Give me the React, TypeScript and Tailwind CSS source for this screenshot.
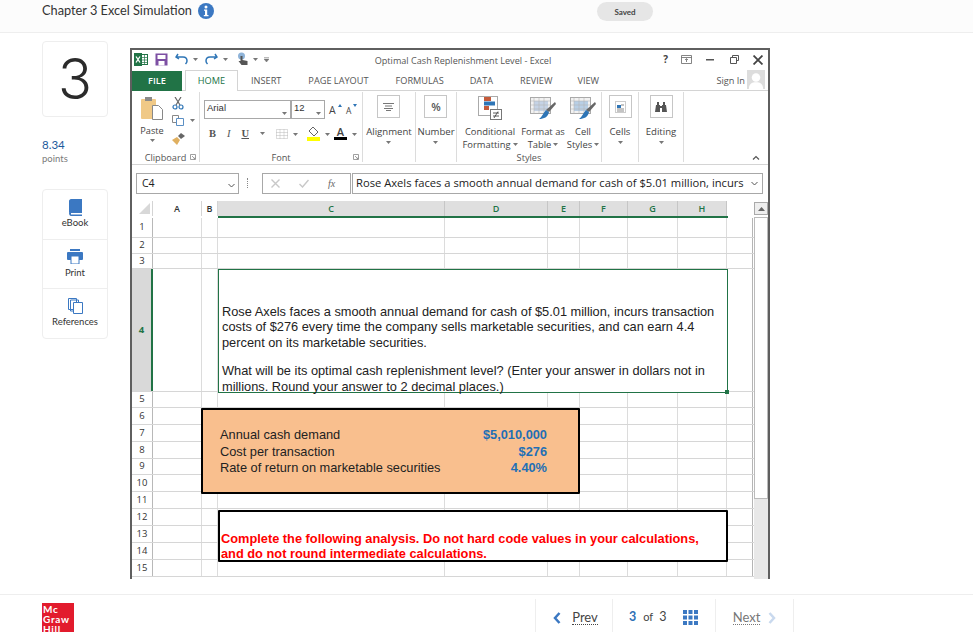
import React from "react";

const columns = [
  { name: "A", w: 49 }, { name: "B", w: 16 }, { name: "C", w: 227 }, { name: "D", w: 103 }, { name: "E", w: 32 },
  { name: "F", w: 48 }, { name: "G", w: 50 }, { name: "H", w: 49 }, { name: "", w: 26 },
];
const rows = [
  { n: "1", h: 20 }, { n: "2", h: 16 }, { n: "3", h: 15 }, { n: "4", h: 123 }, { n: "5", h: 16 }, { n: "6", h: 17 }, { n: "7", h: 17 },
  { n: "8", h: 17 }, { n: "9", h: 16 }, { n: "10", h: 17 }, { n: "11", h: 17 }, { n: "12", h: 17 }, { n: "13", h: 17 }, { n: "14", h: 17 }, { n: "15", h: 17 },
];

function Caret({ className = "" }: { className?: string }) {
  return <svg width="5" height="3" viewBox="0 0 5 3" className={className}><path d="M0 0h5L2.500 3z" fill="#777" /></svg>;
}

function Sheet() {
  return (
    <div className="relative flex min-h-0 flex-1 overflow-hidden">
      <div className="relative w-[623px] shrink-0">
        <div className="flex h-[17px] border-b-2 border-white">
          <div className="flex w-[21px] shrink-0 items-end justify-end border-r border-[#d4d4d4] pr-[2px] pb-[2px]">
            <svg width="11" height="11" viewBox="0 0 11 11"><path d="M11 0v11H0z" fill="#d8d8d8" /></svg>
          </div>
          {columns.map((c, i) => (
            <div
              key={i}
              style={{ width: c.w }}
              className={`flex shrink-0 items-center justify-center border-r text-[9px] font-semibold ${i < 2 ? "border-[#d4d4d4] bg-white text-[#333]" : i < 8 ? "border-[#c6c6c6] bg-[#dfdfdf] text-[#217346]" : "border-transparent bg-white"}`}
            >
              {c.name}
            </div>
          ))}
        </div>
        <div className="absolute top-[15px] left-[86px] h-[2px] w-[510px] bg-[#217346]" />
        {rows.map((r) => (
          <div key={r.n} className="flex border-b border-[#d6d6d6]" style={{ height: r.h }}>
            <div className={`flex w-[21px] shrink-0 items-center justify-center border-r text-[9.500px] ${r.n === "4" ? "border-r-2 border-[#217346] bg-[#d9d9d9] text-[8px] font-bold text-[#217346]" : "border-[#b8b8b8] text-[#333]"}`}>
              {r.n}
            </div>
            {columns.map((c, i) => (
              <div key={i} style={{ width: c.w }} className={`shrink-0 border-r ${i === 8 ? "border-[#b5b5b5]" : "border-[#dcdcdc]"}`} />
            ))}
          </div>
        ))}

        <div className="absolute top-[68px] left-[86px] flex h-[124px] w-[510px] flex-col justify-end border border-[#217346] bg-white pr-[2px] pl-[3px] font-['Liberation_Sans',sans-serif] text-[12.800px] leading-[15.500px] text-[#222]">
          <div className="-mb-[2px] whitespace-nowrap">
            <div>Rose Axels faces a smooth annual demand for cash of $5.01 million, incurs transaction<br />costs of $276 every time the company sells marketable securities, and can earn 4.4<br />percent on its marketable securities.</div>
            <div className="mt-[13px]">What will be its optimal cash replenishment level? (Enter your answer in dollars not in<br />millions. Round your answer to 2 decimal places.)</div>
          </div>
          <div className="absolute right-[-2px] bottom-[-2px] h-[4px] w-[4px] bg-[#217346]" />
        </div>

        <div className="absolute top-[207px] left-[69px] flex h-[86px] w-[379px] items-center rounded-[1px] border-2 border-black bg-[#f9bf8e] pr-[31px] pl-[17px] font-['Liberation_Sans',sans-serif] text-[12.800px] leading-[16.500px] text-[#222]">
          <div className="mt-[2px] flex-1">
            <div>Annual cash demand</div>
            <div>Cost per transaction</div>
            <div>Rate of return on marketable securities</div>
          </div>
          <div className="mt-[2px] text-right font-bold text-[#1f6fb5]">
            <div>$5,010,000</div>
            <div>$276</div>
            <div>4.40%</div>
          </div>
        </div>

        <div className="absolute top-[309px] left-[86px] flex h-[52px] w-[510px] flex-col justify-end rounded-[1px] border-2 border-black bg-white pr-[1px] pl-[1px] font-['Liberation_Sans',sans-serif] text-[12.800px] leading-[15px] font-bold text-[#ff0000]">
          <div className="-mb-[1px] whitespace-nowrap">Complete the following analysis. Do not hard code values in your calculations,<br />and do not round intermediate calculations.</div>
        </div>
      </div>

      <div className="relative flex-1">
        <div className="absolute top-[3px] left-[0px] h-[10px] w-px bg-[#555]" />
        <div className="absolute top-[1px] right-0 flex h-[13px] w-[14px] items-center justify-center border border-[#aaa] bg-[#eee]">
          <svg width="7" height="4" viewBox="0 0 7 4"><path d="M3.500 0L7 4H0z" fill="#666" /></svg>
        </div>
        <div className="absolute top-[16px] right-0 h-[282px] w-[14px] border border-[#bbb] bg-white" />
        <div className="absolute top-[298px] right-0 bottom-0 w-[14px] bg-[#e8e8e8]" />
      </div>
    </div>
  );
}

function Group({ w, label, launcher, children }: { w: number; label?: string; launcher?: boolean; children: React.ReactNode }) {
  return (
    <div className="relative h-full shrink-0 border-r border-[#dcdcdc]" style={{ width: w }}>
      {children}
      {label && <div className="absolute right-0 bottom-[-2px] left-0 text-center text-[9.200px] leading-[12px] text-[#555]">{label}</div>}
      {launcher && (
        <svg width="6" height="6" viewBox="0 0 6 6" className="absolute right-[3px] bottom-[2px]"><path d="M.5.500h5v5h-5zM2 2l3 3M3.500 5H5V3.500" fill="none" stroke="#888" strokeWidth=".8" /></svg>
      )}
    </div>
  );
}

function BigBtn({ label, icon }: { label: React.ReactNode; icon: React.ReactNode }) {
  return (
    <div className="flex h-full flex-col items-center pt-[3px] text-[9.600px] leading-[13px] text-[#444]">
      <div className="flex h-[23px] w-[23px] items-center justify-center border border-[#c6c6c6]">{icon}</div>
      <div className="mt-[7px]">{label}</div>
      <Caret className="mt-[3px]" />
    </div>
  );
}

function TableBrush({ tint }: { tint: string }) {
  return (
    <svg width="26" height="24" viewBox="0 0 26 24">
      <rect x=".5" y="1.500" width="20" height="16" fill="#f2f2f2" stroke="#aaa" />
      <rect x="4" y="5" width="14" height="10" fill={tint} />
      <path d="M4 1.500v16M9 1.500v16M14 1.500v16M.5 5h20M.5 9h20M.5 13h20" stroke="#b5b5b5" strokeWidth=".6" />
      <path d="M25 6l1 2-7 8-3-2z" fill="#666" />
      <path d="M16 14l3 2c-1 5-5 7-10 7 3-2 4-6 7-9z" fill="#2e75b6" />
    </svg>
  );
}

function StyleLabel({ a, b }: { a: string; b: string }) {
  return (
    <>
      <div className="mt-[5px] whitespace-nowrap">{a}</div>
      <div className="flex items-center gap-[2px] whitespace-nowrap">{b}<Caret /></div>
    </>
  );
}

function Ribbon() {
  return (
    <div className="flex h-[74px] shrink-0 border-b border-[#d4d4d4] pt-[1px] pb-[2px] font-['Open_Sans',sans-serif]">
      <Group w={68} label="Clipboard" launcher>
        <div className="absolute top-[4px] left-[8px]">
          <svg width="24" height="24" viewBox="0 0 24 24">
            <rect x="1" y="3" width="15" height="20" rx="1" fill="#f0c987" />
            <rect x="5" y="1" width="7" height="4" fill="#8a8a8a" />
            <path d="M12.500 9.500h6l4 4v10h-10z" fill="#fff" stroke="#888" />
          </svg>
        </div>
        <div className="absolute top-[33px] left-[7px] w-[26px] text-center text-[9.200px] leading-[11px] text-[#444]">Paste</div>
        <Caret className="absolute top-[47px] left-[18px]" />
        <svg width="12" height="13" viewBox="0 0 12 13" className="absolute top-[5px] left-[40px]">
          <path d="M3 0l5 8M9 0L4 8" stroke="#666" strokeWidth="1.200" />
          <circle cx="3" cy="10" r="2" fill="none" stroke="#2e75b6" strokeWidth="1.200" />
          <circle cx="9" cy="10" r="2" fill="none" stroke="#2e75b6" strokeWidth="1.200" />
        </svg>
        <svg width="12" height="11" viewBox="0 0 12 11" className="absolute top-[23px] left-[40px]">
          <path d="M.5.500h6v7h-6z" fill="#fff" stroke="#888" />
          <path d="M4.500 3.500h7v7h-7z" fill="#fff" stroke="#5b8fc4" />
        </svg>
        <Caret className="absolute top-[27px] left-[58px]" />
        <svg width="13" height="12" viewBox="0 0 13 12" className="absolute top-[41px] left-[40px]">
          <path d="M0 7l5-3 3 3-3 5z" fill="#e0b060" />
          <path d="M6 3l3-3 4 3-4 3z" fill="#666" />
        </svg>
      </Group>

      <Group w={163} label="Font" launcher>
        <div className="absolute top-[8px] left-[4px] flex h-[19px] w-[87px] items-start border border-[#a8a8a8] pl-[2px] font-['Liberation_Sans',sans-serif] text-[9.500px] leading-[13px] text-[#333]">
          Arial
          <Caret className="absolute right-[3px] bottom-[3px]" />
        </div>
        <div className="absolute top-[8px] left-[91px] flex h-[19px] w-[34px] items-start border border-[#a8a8a8] pl-[2px] font-['Liberation_Sans',sans-serif] text-[9.500px] leading-[13px] text-[#333]">
          12
          <Caret className="absolute right-[3px] bottom-[3px]" />
        </div>
        <div className="absolute top-[11px] left-[129px] text-[10.500px] leading-[14px] text-[#444]">A</div>
        <div className="absolute top-[13px] left-[146px] text-[8.500px] leading-[12px] text-[#444]">A</div>
        <svg width="4" height="3" viewBox="0 0 4 3" className="absolute top-[12px] left-[138px]"><path d="M0 3l2-3 2 3z" fill="#2e75b6" /></svg>
        <svg width="4" height="3" viewBox="0 0 4 3" className="absolute top-[12px] left-[153px]"><path d="M0 0l2 3 2-3z" fill="#2e75b6" /></svg>
        <div className="absolute top-[35px] left-[9px] flex w-[56px] items-center justify-between text-[10.500px] leading-[13px] text-[#555]">
          <span className="font-['Liberation_Serif',serif] font-bold">B</span>
          <span className="font-['Liberation_Serif',serif] italic">I</span>
          <span className="font-['Liberation_Serif',serif] font-bold underline">U</span>
          <Caret />
        </div>
        <svg width="12" height="10" viewBox="0 0 12 10" className="absolute top-[37px] left-[76px]"><path d="M.5.500h11v9H.5zM4 .5v9M8 .5v9M.5 3.500h11M.5 6.500h11" fill="none" stroke="#bbb" strokeDasharray="1 1" /></svg>
        <Caret className="absolute top-[41px] left-[93px]" />
        <svg width="13" height="15" viewBox="0 0 13 15" className="absolute top-[34px] left-[107px]">
          <path d="M6 1l5 5-4 4-5-5z" fill="#fff" stroke="#666" />
          <rect y="11" width="13" height="4" fill="#ffff00" />
        </svg>
        <Caret className="absolute top-[41px] left-[125px]" />
        <div className="absolute top-[34px] left-[134px] w-[13px] text-center text-[11px] leading-[11px] font-semibold text-[#444]">A</div>
        <div className="absolute top-[45px] left-[134px] h-[3px] w-[13px] bg-black" />
        <Caret className="absolute top-[41px] left-[152px]" />
      </Group>

      <Group w={53}>
        <div className="flex justify-center">
          <BigBtn label="Alignment" icon={<svg width="11" height="8" viewBox="0 0 11 8"><path d="M0 .5h11M2 3h7M1 5.500h9M3 7.500h5" stroke="#777" /></svg>} />
        </div>
      </Group>
      <Group w={41}>
        <div className="flex justify-center">
          <BigBtn label="Number" icon={<span className="text-[11px] font-semibold text-[#555]">%</span>} />
        </div>
      </Group>
      <Group w={145} label="Styles">
        <div className="flex h-full pt-[4px] pl-[5px] text-center text-[9.400px] leading-[13px] text-[#444]">
          <div className="flex w-[56px] flex-col items-center">
            <svg width="24" height="24" viewBox="0 0 24 24">
              <rect x=".5" y=".5" width="19" height="19" fill="#fff" stroke="#aaa" />
              <rect x="6" y="1" width="7" height="4" fill="#c55a3a" />
              <rect x="6" y="5.500" width="11" height="4" fill="#2e75b6" />
              <rect x="6" y="10" width="5" height="4" fill="#c55a3a" />
              <rect x="12.500" y="13.500" width="11" height="10" fill="#fff" stroke="#777" />
              <path d="M15 17h6M15 20h6M20 15.500l-4 6.500" stroke="#333" strokeWidth=".8" />
            </svg>
            <StyleLabel a="Conditional" b="Formatting" />
          </div>
          <div className="ml-[4px] flex w-[42px] flex-col items-center">
            <TableBrush tint="#c5d3e6" />
            <StyleLabel a="Format as" b="Table" />
          </div>
          <div className="ml-[1px] flex w-[36px] flex-col items-center">
            <TableBrush tint="#b8cfe6" />
            <StyleLabel a="Cell" b="Styles" />
          </div>
        </div>
      </Group>
      <Group w={37}>
        <div className="flex justify-center">
          <BigBtn label="Cells" icon={<svg width="11" height="13" viewBox="0 0 11 13"><rect x=".5" y="1.500" width="10" height="11" fill="#fff" stroke="#999" strokeDasharray="1 1" /><rect x="2" y="5" width="4" height="3" fill="#2e75b6" /><path d="M2 9h7M2 11h7M6 5h3" stroke="#888" /></svg>} />
        </div>
      </Group>
      <Group w={45}>
        <div className="flex justify-center">
          <BigBtn label="Editing" icon={<svg width="12" height="10" viewBox="0 0 12 10"><path d="M1 3h4v7H0zM7 3h4l1 7H7zM2 0h2v3H2zM8 0h2v3H8zM5 4h2v2H5z" fill="#555" /></svg>} />
        </div>
      </Group>
      <div className="relative flex-1">
        <svg width="8" height="5" viewBox="0 0 8 5" className="absolute right-[8px] bottom-[2px]"><path d="M1 4.500l3-3 3 3" fill="none" stroke="#555" strokeWidth="1.200" /></svg>
      </div>
    </div>
  );
}

function ExcelWindow() {
  return (
    <div className="mt-[15px] ml-[22px] flex h-[531px] w-[640px] flex-col border-x-2 border-t-2 border-[#5f5f5f] bg-white font-['Open_Sans',sans-serif]">
      <div className="relative flex h-[21px] shrink-0 items-center justify-center pl-[26px] text-[9.100px] text-[#555]">
        <div className="absolute top-[2px] left-[2px] flex items-center">
          <svg width="14" height="13" viewBox="0 0 14 13">
            <rect x="4.500" y="1.500" width="9" height="10" fill="#fff" stroke="#217346" />
            <path d="M8 4.500h5M8 7h5M8 9.500h5M10.500 1.500v10" stroke="#217346" strokeWidth=".7" />
            <rect y="0" width="8" height="13" fill="#217346" />
            <path d="M2 3.500l4 6M6 3.500l-4 6" stroke="#fff" strokeWidth="1.300" />
          </svg>
          <svg width="13" height="13" viewBox="0 0 13 13" className="ml-[7px]"><rect width="12" height="12" y=".5" x=".5" fill="#7d4fa3" /><rect x="2.500" y="2" width="8" height="4" fill="#fff" /><rect x="3.500" y="8" width="6" height="4.500" fill="#fff" /></svg>
          <svg width="13" height="12" viewBox="0 0 13 12" className="ml-[7px]"><path d="M3 1L1 4l3 2M1.500 4H8c3 0 4 2 4 4 0 1-.5 2-1.500 3" fill="none" stroke="#2e75b6" strokeWidth="1.500" /></svg>
          <Caret className="ml-[5px]" />
          <svg width="13" height="12" viewBox="0 0 13 12" className="ml-[7px]"><path d="M10 1l2 3-3 2M11.500 4H5C2 4 1 6 1 8c0 1 .5 2 1.500 3" fill="none" stroke="#2e75b6" strokeWidth="1.500" /></svg>
          <Caret className="ml-[5px]" />
          <svg width="12" height="14" viewBox="0 0 11 14" className="ml-[9px]"><circle cx="4" cy="4" r="3.500" fill="#8fb4d9" /><path d="M3 4h2v4l5 1v4H4L1 9h2z" fill="#555" /></svg>
          <Caret className="ml-[4px]" />
          <svg width="5" height="5" viewBox="0 0 5 5" className="ml-[6px]"><path d="M0 .5h5M0 2h5L2.500 5z" fill="#777" stroke="#777" strokeWidth=".5" /></svg>
        </div>
        <span>Optimal Cash Replenishment Level - Excel</span>
        <div className="absolute top-[2px] right-[5px] flex items-center text-[#444]">
          <span className="mr-[13px] text-[10px] font-bold">?</span>
          <svg width="11" height="9" viewBox="0 0 11 9" className="mr-[14px]"><path d="M.5.500h10v8H.5zM.5 2.500h10M5.500 7V4M4 5l1.500-1.500L7 5" fill="none" stroke="#666" strokeWidth=".8" /></svg>
          <svg width="8" height="2" viewBox="0 0 8 2" className="mr-[16px]"><rect width="8" height="1.500" fill="#555" /></svg>
          <svg width="9" height="9" viewBox="0 0 9 9" className="mr-[14px]"><path d="M2.500 2V.5h6v5H7M.5 2.500h6v6h-6z" fill="none" stroke="#555" /></svg>
          <svg width="10" height="10" viewBox="0 0 9 9"><path d="M.5.500l8 8M8.500.500l-8 8" stroke="#444" strokeWidth="1.600" /></svg>
        </div>
      </div>

      <div className="relative flex h-[20px] shrink-0 items-center border-b border-[#d4d4d4] text-[9.200px] text-[#555]">
        <div className="flex h-[20px] w-[50px] items-center justify-center bg-[#217346] font-semibold text-white">FILE</div>
        <div className="ml-[3px] flex h-[21px] w-[53px] items-center justify-center border-x border-t border-[#d4d4d4] bg-white text-[#217346]">HOME</div>
        <span className="ml-[13px]">INSERT</span>
        <span className="ml-[27px]">PAGE LAYOUT</span>
        <span className="ml-[27px]">FORMULAS</span>
        <span className="ml-[26px]">DATA</span>
        <span className="ml-[27px]">REVIEW</span>
        <span className="ml-[25px]">VIEW</span>
        <span className="absolute right-[23px]">Sign In</span>
        <div className="absolute top-[-1px] right-[3px] h-[19px] w-[18px] overflow-hidden bg-[#ddd]">
          <svg width="18" height="19" viewBox="0 0 19 20"><circle cx="9.500" cy="8" r="4.500" fill="#fff" /><path d="M2 20c0-5 3-7 7.500-7s7.500 2 7.500 7z" fill="#fff" /></svg>
        </div>
      </div>

      <Ribbon />

      <div className="relative h-[36px] shrink-0 text-[10.500px] text-[#222]">
        <div className="absolute top-[8px] left-[4px] flex h-[21px] w-[103px] items-center border border-[#a8a8a8] pl-[5px]">
          C4
          <svg width="7" height="5" viewBox="0 0 7 5" className="absolute right-[3px] bottom-[5px]"><path d="M.5 1L3.500 4l3-3" fill="none" stroke="#555" /></svg>
        </div>
        <div className="absolute top-[13px] left-[115px] h-[10px] border-l border-dotted border-[#888]" />
        <div className="absolute top-[8px] left-[130px] flex h-[21px] w-[89px] items-center border border-[#a8a8a8]">
          <svg width="9" height="9" viewBox="0 0 9 9" className="ml-[8px]"><path d="M.5.500l8 8M8.500.500l-8 8" stroke="#c8c8c8" strokeWidth="1.400" /></svg>
          <svg width="10" height="9" viewBox="0 0 10 9" className="ml-[19px]"><path d="M.5 5l3 3 6-7" fill="none" stroke="#c8c8c8" strokeWidth="1.400" /></svg>
          <span className="ml-[19px] font-['Liberation_Serif',serif] text-[10px] text-[#666] italic">fx</span>
        </div>
        <div className="absolute top-[8px] left-[220px] flex h-[21px] w-[411px] items-center border border-[#a8a8a8] pl-[3px] text-[11.200px] whitespace-nowrap">
          Rose Axels faces a smooth annual demand for cash of $5.01 million, incurs
          <svg width="7" height="5" viewBox="0 0 7 5" className="absolute top-[7px] right-[4px]"><path d="M.5 1L3.500 4l3-3" fill="none" stroke="#555" /></svg>
        </div>
      </div>

      <Sheet />
    </div>
  );
}

function Sidebar() {
  return (
    <div className="mt-[8px] ml-[42px] w-[66px] shrink-0">
      <div className="flex h-[76px] items-center justify-center rounded-[4px] border border-[#eeeeee] font-['Inter',sans-serif] text-[56px] font-light text-[#2b2b2b]">3</div>
      <div className="mt-[21px] text-[11.500px] leading-[14px] text-[#1c5a9c]">8.34</div>
      <div className="text-[9.500px] leading-[14px] text-[#7a7a7a]">points</div>
      <div className="mt-[23px] flex flex-col rounded-[4px] border border-[#eeeeee] text-[9.500px] text-[#333]">
        <div className="flex h-[50px] flex-col items-center justify-center border-b border-[#eeeeee]">
          <svg width="15" height="17" viewBox="0 0 15 17"><path d="M1 2c0-1 1-2 2-2h11v13H3c-1 0-2 .5-2 1z" fill="#3b78c2" /><path d="M1 14c0-1 1-1.500 2-1.500h11V14H3v1.500h11V17H3c-1 0-2-1-2-3z" fill="#3b78c2" /></svg>
          <div className="leading-[14px]">eBook</div>
        </div>
        <div className="flex h-[49px] flex-col items-center justify-center border-b border-[#eeeeee]">
          <svg width="16" height="15" viewBox="0 0 16 15"><rect x="3" y="0" width="10" height="2" fill="#3b78c2" /><rect x="0" y="3" width="16" height="8" rx="1" fill="#3b78c2" /><rect x="4" y="7" width="8" height="8" fill="#fff" stroke="#3b78c2" /></svg>
          <div className="mt-[2px] leading-[14px]">Print</div>
        </div>
        <div className="flex h-[49px] flex-col items-center justify-center">
          <svg width="15" height="16" viewBox="0 0 15 16"><path d="M.5.500h8v11h-8zM2.500 2h8v11h-8z" fill="#fff" stroke="#3b78c2" /><path d="M5.500 4.500h9v11h-9z" fill="#fff" stroke="#3b78c2" /></svg>
          <div className="mt-[1px] leading-[14px]">References</div>
        </div>
      </div>
    </div>
  );
}

export default function App() {
  return (
    <div className="flex h-[632px] w-[973px] flex-col overflow-hidden bg-white font-['Lato',sans-serif]">
      <header className="relative flex h-[33px] shrink-0 items-start border-b border-[#eeeeee] bg-[#fcfcfc] pl-[42px]">
        <span className="mt-[1px] text-[12.750px] leading-[18px] text-[#333]">Chapter 3 Excel Simulation</span>
        <svg width="16" height="16" viewBox="0 0 16 16" className="mt-[3px] ml-[6px]">
          <circle cx="8" cy="8" r="8" fill="#3b78c2" />
          <circle cx="8" cy="4" r="1.500" fill="#fff" />
          <path d="M6 6.500h3.200V12H10.500v1.200h-4.700V12H7V7.700H6z" fill="#fff" />
        </svg>
        <div className="absolute top-[2px] left-[597px] flex h-[19px] w-[56px] items-center justify-center rounded-full bg-[#e6e6e6] text-[8px] font-bold text-[#444]">Saved</div>
      </header>

      <main className="flex h-[562px] shrink-0 overflow-hidden border-b border-[#eeeeee]">
        <Sidebar />
        <ExcelWindow />
      </main>

      <footer className="flex min-h-0 flex-1 overflow-hidden pl-[42px]">
        <div className="mt-[8px] h-[29px] w-[32px] shrink-0 overflow-hidden bg-[#e21b2d] pt-[1px] pl-[1px] text-[10px] leading-[10px] font-bold tracking-[0.700px] text-white">Mc<br />Graw<br />Hill</div>
        <div className="mt-[4px] ml-[461px] flex h-[33px] text-[13px] text-[#444]">
          <div className="flex w-[78px] items-center justify-center gap-[11px] border-x border-[#eeeeee] pt-[4px] pl-[3px]">
            <svg width="8" height="12" viewBox="0 0 8 12"><path d="M6.500 1L2 6l4.500 5" fill="none" stroke="#3b78c2" strokeWidth="2.500" /></svg>
            <span className="border-b border-dotted border-[#444] leading-[13px]">Prev</span>
          </div>
          <div className="flex w-[103px] items-center border-r border-[#eeeeee] pt-[4px] pl-[16px] text-[12.500px]">
            <span className="font-bold text-[#2f6fb5]">3</span>
            <span className="ml-[7px] text-[11px]">of</span>
            <span className="ml-[6px]">3</span>
            <svg width="15" height="15" viewBox="0 0 15 15" className="ml-[17px]"><path d="M0 0h4v4H0zM5.500 0h4v4h-4zM11 0h4v4h-4zM0 5.500h4v4H0zM5.500 5.500h4v4h-4zM11 5.500h4v4h-4zM0 11h4v4H0zM5.500 11h4v4h-4zM11 11h4v4h-4z" fill="#3b78c2" /></svg>
          </div>
          <div className="flex w-[78px] items-center justify-center gap-[8px] border-r border-[#eeeeee] pt-[4px] text-[#777]">
            <span className="border-b border-dotted border-[#777] leading-[13px]">Next</span>
            <svg width="8" height="12" viewBox="0 0 8 12"><path d="M1.500 1L6 6l-4.500 5" fill="none" stroke="#c9d9ee" strokeWidth="2.500" /></svg>
          </div>
        </div>
      </footer>
    </div>
  );
}
